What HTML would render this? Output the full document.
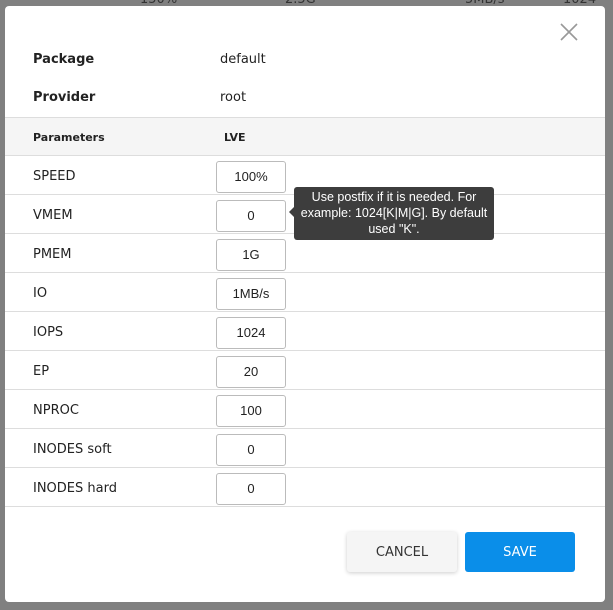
<!DOCTYPE html>
<html><head><style>
body{margin:0;width:613px;height:610px;background:#808080;font-family:"DejaVu Sans","Liberation Sans",sans-serif;position:relative;overflow:hidden;color:#222}
.bg{position:absolute;top:-8px;font-size:13px;color:#333}
.modal{position:absolute;left:5px;top:6px;width:600px;height:596px;background:#fff;border-radius:4px}
.x{position:absolute;left:555px;top:17px}
.lbl{position:absolute;left:28px;font-size:13px;font-weight:bold}
.val{position:absolute;left:215px;font-size:13px}
.hdr{position:absolute;left:0;top:111px;width:600px;height:39px;background:#f5f5f5;border-top:1px solid #ddd;border-bottom:1px solid #ddd;box-sizing:border-box;font-size:11px;font-weight:bold}
.row{position:absolute;left:0;width:600px;height:39px;border-bottom:1px solid #ddd;box-sizing:border-box;font-size:13px}
.row span{position:absolute;left:28px;top:13px}
.row div{position:absolute;left:211px;top:5px;width:70px;height:32px;border:1px solid #bbb;border-radius:3px;box-sizing:border-box;text-align:center;line-height:30px;font-family:"Liberation Sans",sans-serif;font-size:13px}
.tip{position:absolute;left:294px;top:187px;width:200px;height:53px;background:#3d3d3d;border-radius:3px;color:#fff;font-family:"Liberation Sans",sans-serif;font-size:12.5px;text-align:center;line-height:16px;padding-top:2px;box-sizing:border-box}
.tip:before{content:"";position:absolute;left:-5px;top:20px;border:5px solid transparent;border-right-color:#3d3d3d;border-left:0}
.btn{position:absolute;top:526px;width:110px;height:40px;border-radius:3px;text-align:center;line-height:42px;font-size:13px}
</style></head><body>
<div class="bg" style="left:140px">150%</div><div class="bg" style="left:285px">2.5G</div><div class="bg" style="left:465px">5MB/s</div><div class="bg" style="left:563px">1024</div>
<div class="modal">
<svg class="x" width="18" height="18" viewBox="0 0 18 18"><path d="M1 1L17 17M17 1L1 17" stroke="#999" stroke-width="1.6"/></svg>
<div class="lbl" style="top:46px">Package</div><div class="val" style="top:46px">default</div>
<div class="lbl" style="top:84px">Provider</div><div class="val" style="top:84px">root</div>
<div class="hdr"><span style="position:absolute;left:28px;top:13px">Parameters</span><span style="position:absolute;left:219px;top:13px">LVE</span></div>
<div class="row" style="top:150px"><span>SPEED</span><div>100%</div></div>
<div class="row" style="top:189px"><span>VMEM</span><div>0</div></div>
<div class="row" style="top:228px"><span>PMEM</span><div>1G</div></div>
<div class="row" style="top:267px"><span>IO</span><div>1MB/s</div></div>
<div class="row" style="top:306px"><span>IOPS</span><div>1024</div></div>
<div class="row" style="top:345px"><span>EP</span><div>20</div></div>
<div class="row" style="top:384px"><span>NPROC</span><div>100</div></div>
<div class="row" style="top:423px"><span>INODES soft</span><div>0</div></div>
<div class="row" style="top:462px"><span>INODES hard</span><div>0</div></div>
<div class="btn" style="left:342px;background:#f5f5f5;box-shadow:0 1px 4px rgba(0,0,0,.2);color:#333">CANCEL</div>
<div class="btn" style="left:460px;background:#0a8ee9;color:#fff">SAVE</div>
</div>
<div class="tip">Use postfix if it is needed. For example: 1024[K|M|G]. By default used "K".</div>
</body></html>
